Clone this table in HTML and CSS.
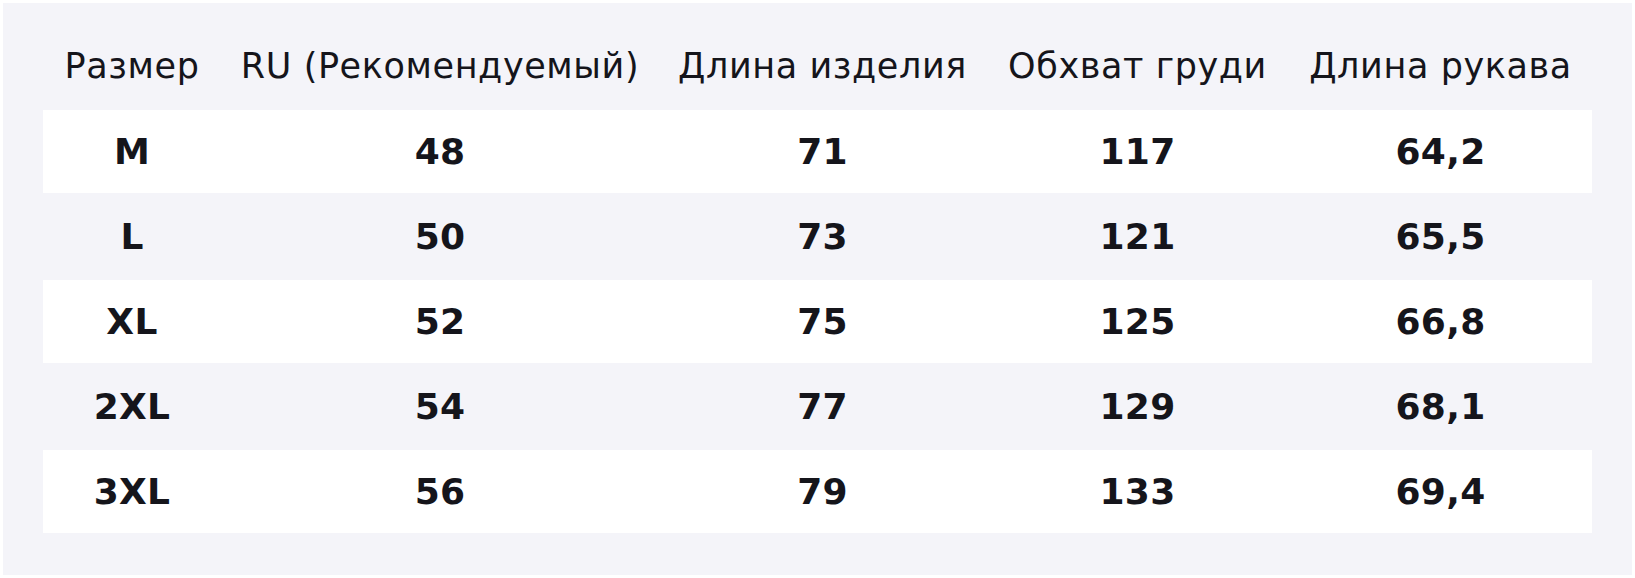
FILE: index.html
```html
<!DOCTYPE html>
<html lang="ru">
<head>
<meta charset="utf-8">
<title>Таблица размеров</title>
<link rel="stylesheet" href="styles.css">
</head>
<body>
<div class="panel">
  <table class="sizes">
    <colgroup>
      <col class="c1"><col class="c2"><col class="c3"><col class="c4"><col class="c5">
    </colgroup>
    <thead>
      <tr class="head">
        <th>Размер</th>
        <th>RU (Рекомендуемый)</th>
        <th>Длина изделия</th>
        <th>Обхват груди</th>
        <th>Длина рукава</th>
      </tr>
    </thead>
    <tbody>
      <tr class="odd"><td>M</td><td>48</td><td>71</td><td>117</td><td>64,2</td></tr>
      <tr class="even"><td>L</td><td>50</td><td>73</td><td>121</td><td>65,5</td></tr>
      <tr class="odd"><td>XL</td><td>52</td><td>75</td><td>125</td><td>66,8</td></tr>
      <tr class="even"><td>2XL</td><td>54</td><td>77</td><td>129</td><td>68,1</td></tr>
      <tr class="odd"><td>3XL</td><td>56</td><td>79</td><td>133</td><td>69,4</td></tr>
    </tbody>
  </table>
</div>
</body>
</html>
```

FILE: styles.css
```css
html, body {
  margin: 0;
  background: #ffffff;
}
body {
  padding: 3px;
  font-family: "DejaVu Sans", "Noto Sans", sans-serif;
  color: #15151b;
}
.panel {
  background: #f4f4f9;
  width: 1629px;
  height: 572px;
  box-sizing: border-box;
  padding: 19px 40px 42px;
}
.sizes {
  border-collapse: collapse;
  table-layout: fixed;
  width: 1549px;
}
.c1 { width: 178px; }
.c2 { width: 438px; }
.c3 { width: 327px; }
.c4 { width: 303px; }
.c5 { width: 303px; }
.sizes th {
  height: 88px;
  padding: 0;
  font-weight: normal;
  font-size: 35px;
  letter-spacing: 0.6px;
  text-align: center;
  vertical-align: middle;
  white-space: nowrap;
}
.sizes td {
  padding: 0;
  font-weight: bold;
  font-size: 36px;
  text-align: center;
  vertical-align: middle;
  letter-spacing: 0.3px;
}
.odd { background: #ffffff; }
.odd td { height: 83px; }
.even { background: transparent; }
.even td { height: 87px; }
```
